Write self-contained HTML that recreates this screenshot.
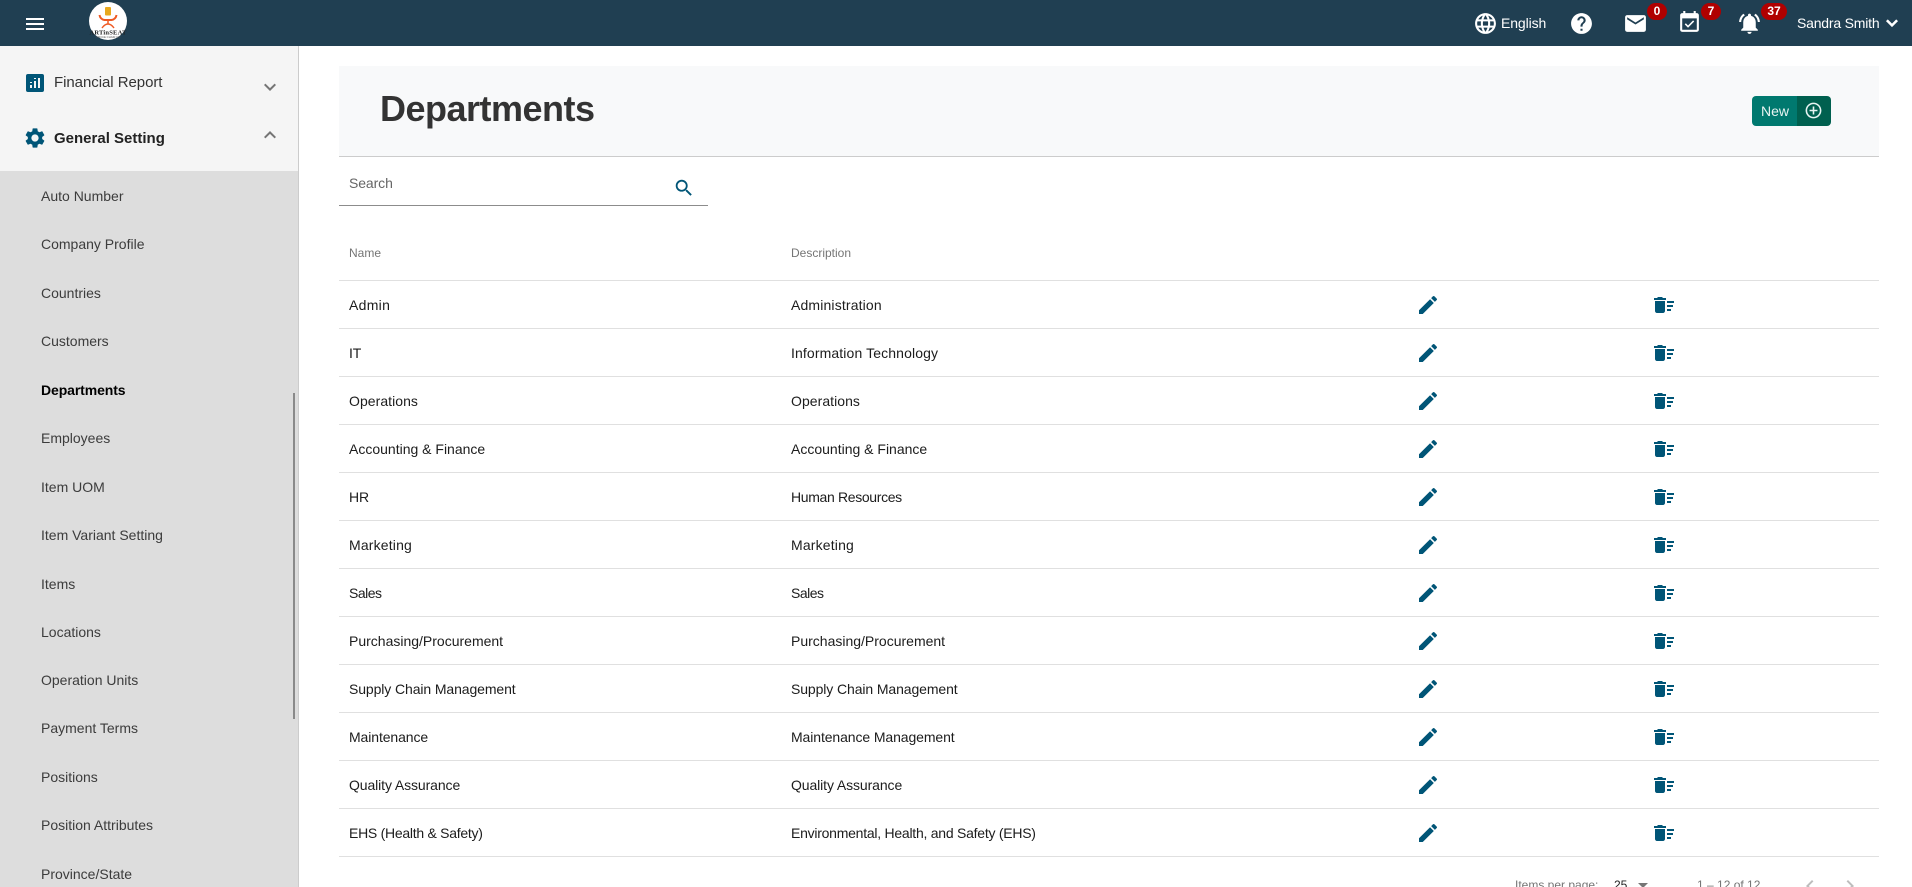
<!DOCTYPE html>
<html><head><meta charset="utf-8"><title>Departments</title>
<style>
html,body{margin:0;padding:0;width:1912px;height:887px;overflow:hidden;background:#fff;font-family:"Liberation Sans",sans-serif}
body{position:relative}
.a{position:absolute;white-space:nowrap}
svg{position:absolute;display:block}
#top{position:absolute;left:0;top:0;width:1912px;height:46px;background:#203f52}
.w{color:#fff;font-size:14px;line-height:20px}
.bd{position:absolute;height:17px;border-radius:9px;background:#b00000;color:#fff;font-size:12px;font-weight:bold;text-align:center;line-height:17px}
#side{position:absolute;left:0;top:46px;width:298px;height:841px;background:#f5f5f5;border-right:1px solid #ccc;overflow:hidden}
#sub{position:absolute;left:0;top:125px;width:298px;height:716px;background:#ddd}
.m{position:absolute;left:41px;font-size:14px;line-height:18px;color:#3c3c3c;white-space:nowrap}
.r{position:absolute;left:339px;width:1540px;height:1px;background:#e0e0e0}
.t{position:absolute;font-size:14px;line-height:18px;color:#1c1c1c;white-space:nowrap;letter-spacing:-.1px}
</style></head><body>
<svg width="0" height="0" style="position:absolute"><defs>
<symbol id="ed" viewBox="0 0 24 24"><path fill="#005577" d="M3 17.25V21h3.75L17.81 9.94l-3.75-3.75L3 17.25zM20.71 7.04c.39-.39.39-1.02 0-1.41l-2.34-2.34c-.39-.39-1.02-.39-1.41 0l-1.83 1.83 3.75 3.75 1.83-1.83z"/></symbol>
<symbol id="de" viewBox="0 0 24 24"><path fill="#005577" d="M15 16h4v2h-4zm0-8h7v2h-7zm0 4h6v2h-6zM3 18c0 1.1.9 2 2 2h6c1.1 0 2-.9 2-2V8H3v10zM14 5h-3l-1-1H6L5 5H2v2h12z"/></symbol>
</defs></svg>

<div id="top"></div>
<svg style="left:23px;top:12px" width="24" height="24" viewBox="0 0 24 24"><path fill="#fff" d="M3 18h18v-2H3v2zm0-5h18v-2H3v2zm0-7v2h18V6H3z"/></svg>
<svg style="left:89px;top:2px" width="38" height="38" viewBox="0 0 38 38">
<circle cx="19" cy="19" r="19" fill="#fff"/>
<rect x="16" y="5" width="6" height="8.500" rx="1" fill="#e8a91e"/>
<path d="M10.500 13c.5 3 2 4.500 5 5h7c3-.5 4.500-2 5-5" fill="none" stroke="#ef5a24" stroke-width="2"/>
<path d="M19 18v4M13 26c2-2.800 4-4 6-4s4 1.200 6 4" fill="none" stroke="#ef5a24" stroke-width="1.500"/>
<text x="19" y="32.500" font-family="Liberation Serif" font-size="6.500" font-weight="bold" text-anchor="middle" fill="#222" letter-spacing=".2">ARTinSEAT</text>
<text x="19" y="36" font-family="Liberation Sans" font-size="2.800" text-anchor="middle" fill="#555">OFFICE CHAIR CO</text>
</svg>

<svg style="left:1473px;top:11px" width="25" height="25" viewBox="0 0 24 24"><path fill="#fff" d="M11.990 2C6.470 2 2 6.480 2 12s4.470 10 9.990 10C17.520 22 22 17.520 22 12S17.520 2 11.990 2zm6.930 6h-2.950c-.32-1.250-.78-2.450-1.380-3.560 1.840.63 3.370 1.910 4.330 3.560zM12 4.040c.83 1.200 1.480 2.530 1.910 3.960h-3.820c.43-1.430 1.080-2.760 1.910-3.960zM4.260 14C4.100 13.360 4 12.690 4 12s.1-1.360.26-2h3.380c-.08.66-.14 1.320-.14 2 0 .68.06 1.340.14 2H4.260zm.82 2h2.950c.32 1.250.78 2.450 1.380 3.560-1.840-.63-3.370-1.900-4.330-3.560zm2.950-8H5.080c.96-1.660 2.490-2.930 4.330-3.560C8.810 5.550 8.350 6.750 8.030 8zM12 19.960c-.83-1.200-1.480-2.530-1.910-3.960h3.820c-.43 1.430-1.080 2.760-1.910 3.960zM14.340 14H9.660c-.09-.66-.16-1.320-.16-2 0-.68.07-1.350.16-2h4.680c.09.65.16 1.320.16 2 0 .68-.07 1.340-.16 2zm.25 5.560c.6-1.110 1.060-2.310 1.380-3.560h2.950c-.96 1.650-2.490 2.930-4.330 3.560zM16.360 14c.08-.66.14-1.320.14-2 0-.68-.06-1.340-.14-2h3.380c.16.64.26 1.310.26 2s-.1 1.360-.26 2h-3.380z"/></svg>
<div class="a w" style="left:1501px;top:13px;letter-spacing:-.1px">English</div>
<svg style="left:1569px;top:11px" width="25" height="25" viewBox="0 0 24 24"><path fill="#fff" d="M12 2C6.480 2 2 6.480 2 12s4.480 10 10 10 10-4.480 10-10S17.520 2 12 2zm1 17h-2v-2h2v2zm2.070-7.750l-.9.92C13.450 12.900 13 13.500 13 15h-2v-.5c0-1.100.45-2.100 1.170-2.830l1.240-1.260c.37-.36.59-.86.59-1.410 0-1.100-.9-2-2-2s-2 .9-2 2H8c0-2.210 1.790-4 4-4s4 1.790 4 4c0 .88-.36 1.680-.93 2.250z"/></svg>
<svg style="left:1623px;top:11px" width="25" height="25" viewBox="0 0 24 24"><path fill="#fff" d="M20 4H4c-1.100 0-1.990.9-1.990 2L2 18c0 1.100.9 2 2 2h16c1.100 0 2-.9 2-2V6c0-1.100-.9-2-2-2zm0 4l-8 5-8-5V6l8 5 8-5v2z"/></svg>
<div class="bd" style="left:1647px;top:3px;width:20px">0</div>
<svg style="left:1677px;top:10px" width="25" height="25" viewBox="0 0 24 24"><path fill="#fff" d="M16.530 11.060L15.470 10l-4.880 4.880-2.120-2.120-1.060 1.060L10.590 17l5.940-5.940zM19 3h-1V1h-2v2H8V1H6v2H5c-1.110 0-1.990.9-1.990 2L3 19c0 1.100.89 2 2 2h14c1.100 0 2-.9 2-2V5c0-1.100-.9-2-2-2zm0 16H5V8h14v11z"/></svg>
<div class="bd" style="left:1701px;top:3px;width:20px">7</div>
<svg style="left:1737px;top:11px" width="25" height="25" viewBox="0 0 24 24"><path fill="#fff" d="M7.580 4.080L6.150 2.650C3.750 4.480 2.170 7.300 2.030 10.500h2c.15-2.650 1.510-4.970 3.550-6.420zm12.390 6.420h2c-.15-3.200-1.730-6.020-4.120-7.850l-1.420 1.430c2.020 1.450 3.390 3.770 3.540 6.420zM18 11c0-3.070-1.640-5.640-4.500-6.320V4c0-.83-.67-1.500-1.500-1.500s-1.500.67-1.500 1.500v.68C7.630 5.360 6 7.920 6 11v5l-2 2v1h16v-1l-2-2v-5zm-6 11c.14 0 .27-.01.4-.04.65-.14 1.180-.58 1.440-1.180.1-.24.15-.5.15-.78h-4c.01 1.100.9 2 2.010 2z"/></svg>
<div class="bd" style="left:1761px;top:3px;width:26px">37</div>
<div class="a w" style="left:1797px;top:13px;letter-spacing:-.2px">Sandra Smith</div>
<svg style="left:1881px;top:12px" width="22" height="22" viewBox="0 0 24 24"><path fill="#fff" d="M7.410 8.590L12 13.170l4.590-4.580L18 10l-6 6-6-6 1.410-1.410z" stroke="#fff" stroke-width=".8"/></svg>

<div id="side">
<div id="sub"></div>
</div>
<svg style="left:23px;top:71px" width="24" height="24" viewBox="0 0 24 24"><path fill="#005577" d="M5 3h14a2 2 0 0 1 2 2v14a2 2 0 0 1-2 2H5a2 2 0 0 1-2-2V5a2 2 0 0 1 2-2zm2 11v3h2v-3H7zm4-4v7h2v-7h-2zm4-3v10h2V7h-2zM11 7v1h2V7h-2zM7 11v1h2v-1H7z"/></svg>
<div class="a" style="left:54px;top:73px;font-size:15px;line-height:20px;color:#333;letter-spacing:-.05px">Financial Report</div>
<svg style="left:258px;top:75px" width="24" height="24" viewBox="0 0 24 24"><path fill="#757575" d="M7.410 8.590L12 13.170l4.590-4.580L18 10l-6 6-6-6 1.410-1.410z"/></svg>
<svg style="left:23px;top:126px" width="24" height="24" viewBox="0 0 24 24"><path fill="#005577" d="M19.140 12.940c.04-.3.06-.61.06-.94 0-.32-.02-.64-.07-.94l2.030-1.580c.18-.14.23-.41.12-.61l-1.920-3.320c-.12-.22-.37-.29-.59-.22l-2.390.96c-.5-.38-1.030-.7-1.620-.94l-.36-2.540c-.04-.24-.24-.41-.48-.41h-3.840c-.24 0-.43.17-.47.41l-.36 2.540c-.59.24-1.130.57-1.620.94l-2.390-.96c-.22-.08-.47 0-.59.22L2.740 8.870c-.12.21-.08.47.12.61l2.030 1.580c-.05.3-.09.63-.09.94s.02.64.07.94l-2.030 1.580c-.18.14-.23.41-.12.61l1.920 3.320c.12.22.37.29.59.22l2.390-.96c.5.38 1.030.7 1.620.94l.36 2.540c.05.24.24.41.48.41h3.840c.24 0 .44-.17.47-.41l.36-2.540c.59-.24 1.130-.56 1.620-.94l2.390.96c.22.08.47 0 .59-.22l1.920-3.320c.12-.22.07-.47-.12-.61l-2.010-1.580zM12 15.600c-1.980 0-3.600-1.620-3.600-3.600s1.620-3.600 3.600-3.600 3.600 1.620 3.600 3.600-1.620 3.600-3.600 3.600z"/></svg>
<div class="a" style="left:54px;top:129px;font-size:15px;line-height:20px;font-weight:bold;color:#222">General Setting</div>
<svg style="left:258px;top:123px" width="24" height="24" viewBox="0 0 24 24"><path fill="#757575" d="M7.410 15.410L12 10.830l4.590 4.580L18 14l-6-6-6 6z"/></svg>

<div class="m" style="top:187px">Auto Number</div>
<div class="m" style="top:235px">Company Profile</div>
<div class="m" style="top:284px">Countries</div>
<div class="m" style="top:332px">Customers</div>
<div class="m" style="top:381px;font-weight:bold;color:#000;letter-spacing:-.1px">Departments</div>
<div class="m" style="top:429px">Employees</div>
<div class="m" style="top:478px">Item UOM</div>
<div class="m" style="top:526px">Item Variant Setting</div>
<div class="m" style="top:575px">Items</div>
<div class="m" style="top:623px">Locations</div>
<div class="m" style="top:671px">Operation Units</div>
<div class="m" style="top:719px">Payment Terms</div>
<div class="m" style="top:768px">Positions</div>
<div class="m" style="top:816px">Position Attributes</div>
<div class="m" style="top:865px">Province/State</div>
<div class="a" style="left:293px;top:393px;width:2px;height:326px;background:#8a8a8a"></div>

<div class="a" style="left:339px;top:66px;width:1540px;height:90px;background:#f8f9fa;border-bottom:1px solid #ccc"></div>
<div class="a" style="left:380px;top:87px;font-size:36px;line-height:44px;font-weight:bold;color:#333;letter-spacing:-.5px">Departments</div>
<div class="a" style="left:1752px;top:96px;width:45px;height:30px;background:#00796f;border-radius:4px 0 0 4px;color:#e8f4f2;font-size:14px;line-height:30px;text-indent:9px">New</div>
<div class="a" style="left:1797px;top:96px;width:34px;height:30px;background:#00604f;border-radius:0 4px 4px 0"></div>
<svg style="left:1804px;top:101px" width="19" height="19" viewBox="0 0 24 24"><path fill="#e8f4f2" d="M13 7h-2v4H7v2h4v4h2v-4h4v-2h-4V7zm-1-5C6.480 2 2 6.480 2 12s4.480 10 10 10 10-4.480 10-10S17.520 2 12 2zm0 18c-4.410 0-8-3.590-8-8s3.590-8 8-8 8 3.590 8 8-3.590 8-8 8z"/></svg>

<div class="a" style="left:349px;top:174px;font-size:14px;line-height:18px;color:#666;letter-spacing:-.1px">Search</div>
<svg style="left:673px;top:177px" width="22" height="22" viewBox="0 0 24 24"><path fill="#005577" d="M15.500 14h-.79l-.28-.27C15.410 12.590 16 11.110 16 9.500 16 5.910 13.090 3 9.500 3S3 5.910 3 9.500 5.910 16 9.500 16c1.610 0 3.090-.59 4.230-1.570l.27.28v.79l5 4.990L20.490 19l-4.990-5zm-6 0C7.010 14 5 11.990 5 9.500S7.010 5 9.500 5 14 7.010 14 9.500 11.990 14 9.500 14z"/></svg>
<div class="a" style="left:339px;top:205px;width:369px;height:1px;background:#8c8c8c"></div>

<div class="a" style="left:349px;top:245px;font-size:12px;line-height:16px;color:#757575">Name</div>
<div class="a" style="left:791px;top:245px;font-size:12px;line-height:16px;color:#757575">Description</div>

<div class="r" style="top:280px"></div><div class="r" style="top:328px"></div><div class="r" style="top:376px"></div><div class="r" style="top:424px"></div><div class="r" style="top:472px"></div><div class="r" style="top:520px"></div><div class="r" style="top:568px"></div><div class="r" style="top:616px"></div><div class="r" style="top:664px"></div><div class="r" style="top:712px"></div><div class="r" style="top:760px"></div><div class="r" style="top:808px"></div><div class="r" style="top:856px"></div>

<div class="t" style="left:349px;top:296px;letter-spacing:.3px">Admin</div><div class="t" style="left:791px;top:296px;letter-spacing:.15px">Administration</div>
<div class="t" style="left:349px;top:344px">IT</div><div class="t" style="left:791px;top:344px;letter-spacing:.12px">Information Technology</div>
<div class="t" style="left:349px;top:392px;letter-spacing:.05px">Operations</div><div class="t" style="left:791px;top:392px;letter-spacing:.05px">Operations</div>
<div class="t" style="left:349px;top:440px;letter-spacing:0">Accounting &amp; Finance</div><div class="t" style="left:791px;top:440px;letter-spacing:0">Accounting &amp; Finance</div>
<div class="t" style="left:349px;top:488px">HR</div><div class="t" style="left:791px;top:488px;letter-spacing:-.34px">Human Resources</div>
<div class="t" style="left:349px;top:536px;letter-spacing:.17px">Marketing</div><div class="t" style="left:791px;top:536px;letter-spacing:.17px">Marketing</div>
<div class="t" style="left:349px;top:584px;letter-spacing:-.5px">Sales</div><div class="t" style="left:791px;top:584px;letter-spacing:-.5px">Sales</div>
<div class="t" style="left:349px;top:632px;letter-spacing:0">Purchasing/Procurement</div><div class="t" style="left:791px;top:632px;letter-spacing:0">Purchasing/Procurement</div>
<div class="t" style="left:349px;top:680px">Supply Chain Management</div><div class="t" style="left:791px;top:680px">Supply Chain Management</div>
<div class="t" style="left:349px;top:728px">Maintenance</div><div class="t" style="left:791px;top:728px">Maintenance Management</div>
<div class="t" style="left:349px;top:776px">Quality Assurance</div><div class="t" style="left:791px;top:776px">Quality Assurance</div>
<div class="t" style="left:349px;top:824px;letter-spacing:-.27px">EHS (Health &amp; Safety)</div><div class="t" style="left:791px;top:824px;letter-spacing:-.25px">Environmental, Health, and Safety (EHS)</div>

<svg style="left:1416px;top:293px" width="24" height="24"><use href="#ed"/></svg><svg style="left:1652px;top:293px" width="24" height="24"><use href="#de"/></svg>
<svg style="left:1416px;top:341px" width="24" height="24"><use href="#ed"/></svg><svg style="left:1652px;top:341px" width="24" height="24"><use href="#de"/></svg>
<svg style="left:1416px;top:389px" width="24" height="24"><use href="#ed"/></svg><svg style="left:1652px;top:389px" width="24" height="24"><use href="#de"/></svg>
<svg style="left:1416px;top:437px" width="24" height="24"><use href="#ed"/></svg><svg style="left:1652px;top:437px" width="24" height="24"><use href="#de"/></svg>
<svg style="left:1416px;top:485px" width="24" height="24"><use href="#ed"/></svg><svg style="left:1652px;top:485px" width="24" height="24"><use href="#de"/></svg>
<svg style="left:1416px;top:533px" width="24" height="24"><use href="#ed"/></svg><svg style="left:1652px;top:533px" width="24" height="24"><use href="#de"/></svg>
<svg style="left:1416px;top:581px" width="24" height="24"><use href="#ed"/></svg><svg style="left:1652px;top:581px" width="24" height="24"><use href="#de"/></svg>
<svg style="left:1416px;top:629px" width="24" height="24"><use href="#ed"/></svg><svg style="left:1652px;top:629px" width="24" height="24"><use href="#de"/></svg>
<svg style="left:1416px;top:677px" width="24" height="24"><use href="#ed"/></svg><svg style="left:1652px;top:677px" width="24" height="24"><use href="#de"/></svg>
<svg style="left:1416px;top:725px" width="24" height="24"><use href="#ed"/></svg><svg style="left:1652px;top:725px" width="24" height="24"><use href="#de"/></svg>
<svg style="left:1416px;top:773px" width="24" height="24"><use href="#ed"/></svg><svg style="left:1652px;top:773px" width="24" height="24"><use href="#de"/></svg>
<svg style="left:1416px;top:821px" width="24" height="24"><use href="#ed"/></svg><svg style="left:1652px;top:821px" width="24" height="24"><use href="#de"/></svg>

<div class="a" style="left:1515px;top:877px;font-size:12px;line-height:16px;color:#757575">Items per page:</div>
<div class="a" style="left:1614px;top:877px;font-size:12px;line-height:16px;color:#222">25</div>
<div class="a" style="left:1638px;top:883px;width:0;height:0;border-left:5px solid transparent;border-right:5px solid transparent;border-top:5px solid #757575"></div>
<div class="a" style="left:1697px;top:877px;font-size:12px;line-height:16px;color:#757575">1 – 12 of 12</div>
<svg style="left:1798px;top:874px" width="24" height="24" viewBox="0 0 24 24"><path fill="#bdbdbd" d="M15.410 7.410L14 6l-6 6 6 6 1.410-1.410L10.830 12z"/></svg>
<svg style="left:1838px;top:874px" width="24" height="24" viewBox="0 0 24 24"><path fill="#bdbdbd" d="M10 6L8.590 7.410 13.170 12l-4.580 4.590L10 18l6-6z"/></svg>
</body></html>
